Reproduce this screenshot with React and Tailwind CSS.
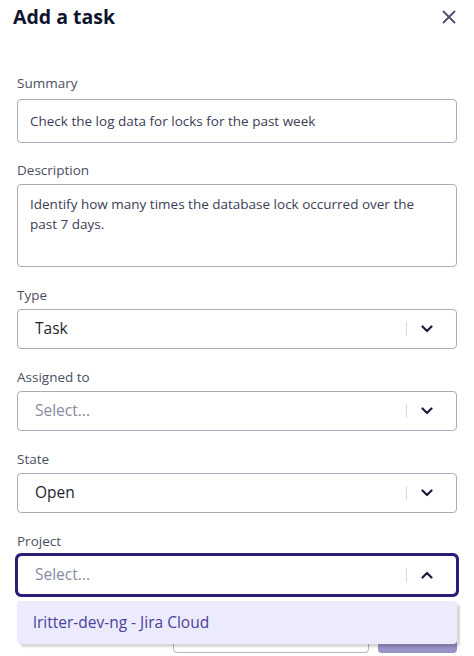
import React from 'react';

const font = { fontFamily: '"Open Sans", "Noto Sans", sans-serif' };

const Chevron = ({ up = false }) => (
  <svg width="12" height="8" viewBox="0 0 12 8" fill="none">
    <path
      d={up ? 'M1.5 6.5L6 2l4.5 4.5' : 'M1.5 1.5L6 6l4.5-4.5'}
      stroke="#1b1f3b"
      strokeWidth="2.2"
      strokeLinecap="round"
      strokeLinejoin="round"
    />
  </svg>
);

const Label = ({ children, className = '' }) => (
  <label className={`block text-[13.5px] leading-[20px] text-[#4a4f5e] ${className}`}>{children}</label>
);

const Select = ({ value, placeholder, open = false }) => (
  <div
    className={`h-[40px] flex items-center rounded-[4px] bg-white ${
      open ? 'border border-[#2b1c78] outline-[3px] outline outline-[#2b1c78] outline-offset-[-1px]' : 'border border-[#a9adb8]'
    }`}
  >
    <span
      className={`flex-1 pl-[17px] text-[15.5px] ${value ? 'text-[#1b1f30]' : 'text-[#878ca3]'}`}
    >
      {value || placeholder}
    </span>
    <span className="w-px h-[14px] bg-[#d6d8de]" />
    <span className="pl-[14px] pr-[23px] flex items-center">
      <Chevron up={open} />
    </span>
  </div>
);

const App = () => {
  return (
    <div className="w-[474px] h-[656px] bg-white overflow-hidden" style={font}>
      <div className="h-[34px] flex items-center justify-between pl-[13px] pr-[18px]">
        <h2 className="text-[19.5px] font-bold text-[#10152e]">Add a task</h2>
        <svg width="14" height="14" viewBox="0 0 14 14" fill="none">
          <path d="M1.5 1.5l11 11M12.5 1.5l-11 11" stroke="#4b5068" strokeWidth="1.8" strokeLinecap="round" />
        </svg>
      </div>

      <div className="px-[17px] pt-[39px]">
        <Label className="mb-[6px]">Summary</Label>
        <div className="h-[44px] flex items-center rounded-[4px] border border-[#a9adb8] pl-[12px] text-[13.5px] text-[#3b4055]">
          Check the log data for locks for the past week
        </div>

        <Label className="mt-[17px] mb-[4px]">Description</Label>
        <div className="h-[83px] rounded-[4px] border border-[#a9adb8] pl-[12px] pr-[20px] pt-[9px] text-[13.5px] leading-[20px] text-[#3b4055]">
          Identify how many times the database lock occurred over the past 7 days.
        </div>

        <Label className="mt-[18px] mb-[4px]">Type</Label>
        <Select value="Task" />

        <Label className="mt-[18px] mb-[4px]">Assigned to</Label>
        <Select placeholder="Select..." />

        <Label className="mt-[18px] mb-[4px]">State</Label>
        <Select value="Open" />

        <Label className="mt-[18px] mb-[4px]">Project</Label>
        <div className="relative">
          <Select placeholder="Select..." open />

          <div className="flex justify-end gap-[9px] mt-[18px]">
            <button className="w-[196px] h-[40px] rounded-[4px] border border-[#b4b7c2] bg-white text-[15px] text-[#2b1c78]">
              Cancel
            </button>
            <button className="w-[79px] h-[40px] rounded-[4px] bg-[#9893c6] text-[15px] text-white">
              Save
            </button>
          </div>

          <div className="absolute left-0 right-0 top-[46px] h-[43px] rounded-[4px] bg-[#ecebfb] shadow-[3px_3px_2px_rgba(0,0,0,0.16)] flex items-center pl-[16px] text-[15.5px] text-[#4a3f9c]">
            lritter-dev-ng - Jira Cloud
          </div>
        </div>
      </div>
    </div>
  );
};

export default App;
